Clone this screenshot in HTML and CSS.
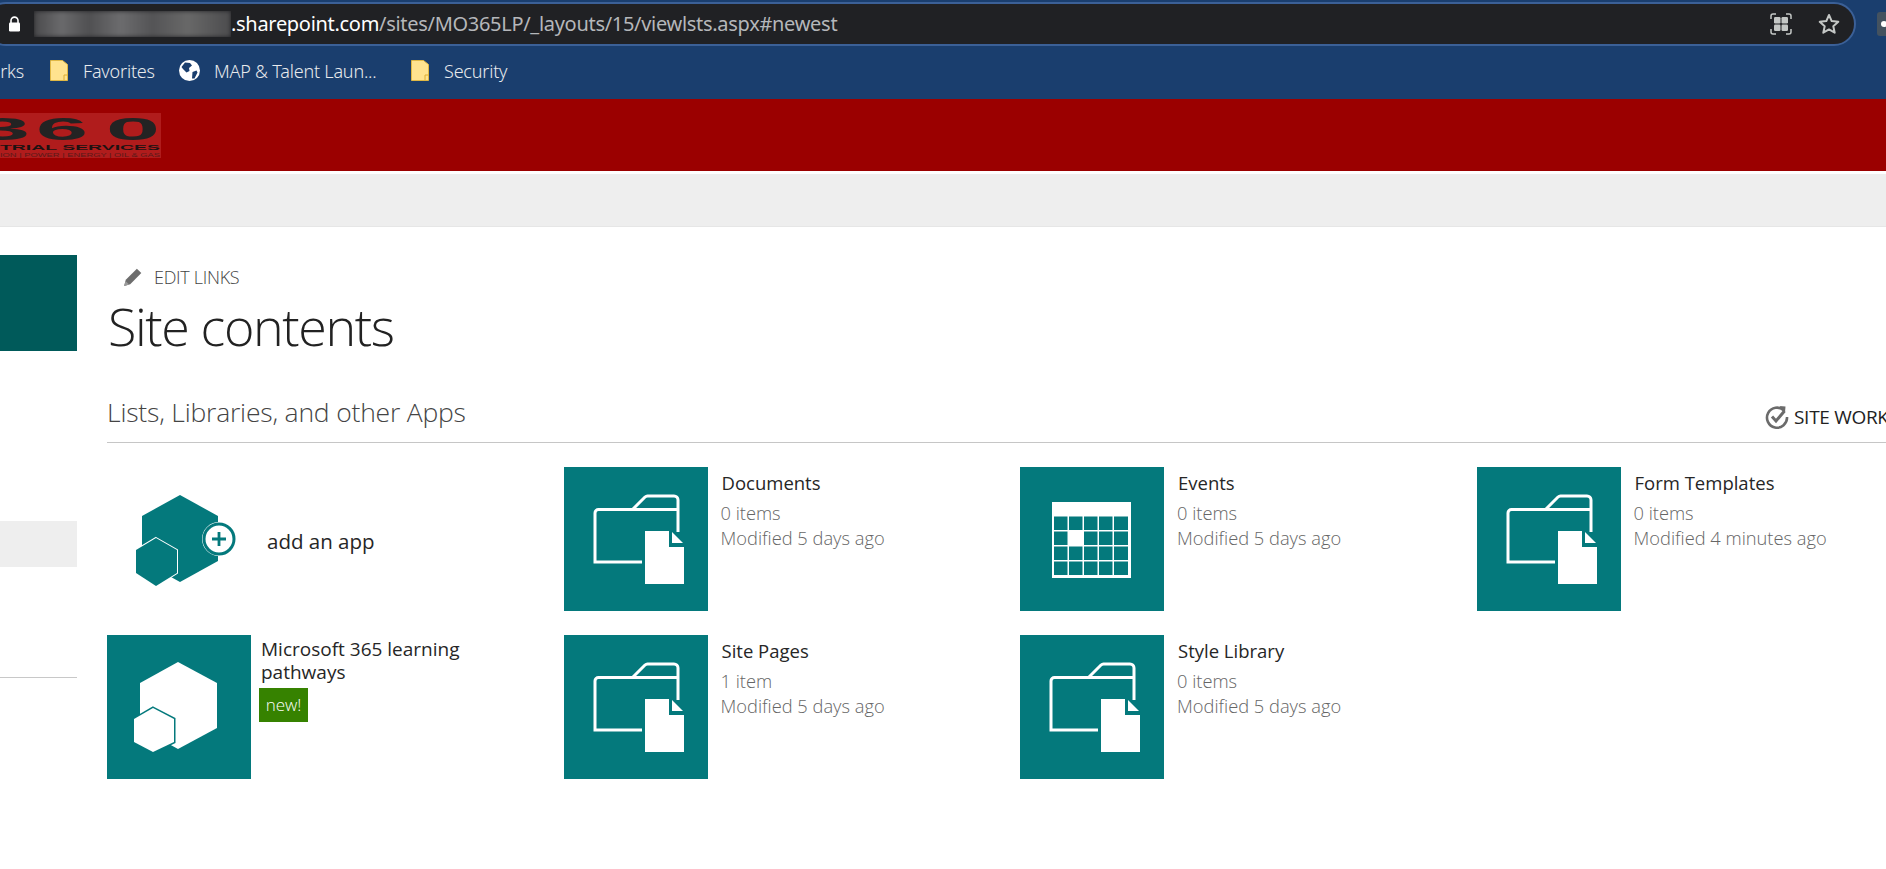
FILE: index.html
```html
<!DOCTYPE html>
<html lang="en">
<head>
<meta charset="utf-8">
<title>Site contents</title>
<link rel="stylesheet" href="styles.css">
</head>
<body>
<header class="browser">
  <div class="toolbar">
    <div class="omnibox">
      <svg class="lock" width="13" height="16" viewBox="0 0 13 16"><path d="M3 7V4.600a3.500 3.500 0 0 1 7 0V7" fill="none" stroke="#fff" stroke-width="1.600"/><rect x="1" y="6.500" width="11" height="9" rx="1.200" fill="#fff"/></svg>
      <div class="blur-box"><div class="blur-fill"></div></div>
      <div class="url"><span class="url-host">.sharepoint.com</span><span class="url-path">/sites/MO365LP/_layouts/15/viewlsts.aspx#newest</span></div>
      <svg class="omni-icon" width="22" height="22" viewBox="0 0 22 22"><path d="M1 6V3a2 2 0 0 1 2-2h3M16 1h3a2 2 0 0 1 2 2v3M21 16v3a2 2 0 0 1-2 2h-3M6 21H3a2 2 0 0 1-2-2v-3" fill="none" stroke="#c4c7c5" stroke-width="1.500"/><rect x="4" y="4" width="6.500" height="6.500" rx="1.200" fill="#c4c7c5"/><rect x="11.500" y="4" width="6.500" height="6.500" rx="1.200" fill="#c4c7c5"/><rect x="4" y="11.500" width="6.500" height="6.500" rx="1.200" fill="#c4c7c5"/><rect x="11.500" y="11.500" width="6.500" height="6.500" rx="1.200" fill="#c4c7c5"/></svg>
      <svg class="omni-icon star" width="22" height="22" viewBox="0 0 22 22"><path d="M11 2l2.700 6.100 6.600.7-5 4.400 1.400 6.500L11 16.400l-5.700 3.300 1.400-6.500-5-4.400 6.600-.7z" fill="none" stroke="#c4c7c5" stroke-width="2" stroke-linejoin="round"/></svg>
    </div>
    <div class="ext-button"><span class="ext-dot"></span></div>
  </div>
  <nav class="bookmarks">
    <span class="bm-cut">rks</span>
    <svg class="bm-folder" width="18" height="21" viewBox="0 0 18 21"><path d="M.5.5h12l5 4v16H.5z" fill="#ffe38f" stroke="#e0b845"/><path d="M14 20v-5h3.500" fill="none" stroke="#dcae32"/></svg>
    <span class="bm-label bm-fav">Favorites</span>
    <svg class="bm-globe" width="21" height="21" viewBox="0 0 21 21"><circle cx="10.500" cy="10.500" r="10.500" fill="#fff"/><path d="M6 2.500l5 .5 2 2.500-3 2.500.5 3-3 1.500L4 9 2.500 7zM13.500 12l4-1.500 1 2-3 6-2.500 0z" fill="#1a3e6e"/></svg>
    <span class="bm-label bm-map">MAP &amp; Talent Laun...</span>
    <svg class="bm-folder" width="18" height="21" viewBox="0 0 18 21"><path d="M.5.5h12l5 4v16H.5z" fill="#ffe38f" stroke="#e0b845"/><path d="M14 20v-5h3.500" fill="none" stroke="#dcae32"/></svg>
    <span class="bm-label">Security</span>
  </nav>
</header>

<div class="brand-bar">
  <svg class="logo" width="161" height="45" viewBox="0 0 161 45">
    <rect width="161" height="45" fill="#b01c1c"/>
    <text class="logo-num" x="-24" y="27" textLength="54" lengthAdjust="spacingAndGlyphs">3</text>
    <text class="logo-num" x="36" y="27" textLength="52" lengthAdjust="spacingAndGlyphs">6</text>
    <text class="logo-num" x="106" y="27" textLength="54" lengthAdjust="spacingAndGlyphs">0</text>
    <text class="logo-sub" x="0" y="37" textLength="160" lengthAdjust="spacingAndGlyphs">TRIAL SERVICES</text>
    <text class="logo-tiny" x="0" y="44" textLength="160" lengthAdjust="spacingAndGlyphs">ION | POWER | ENERGY | OIL &amp; GAS</text>
  </svg>
</div>

<div class="ribbon"></div>

<main class="page">
  <aside class="sidenav">
    <div class="nav-block"></div>
    <div class="nav-selected"></div>
    <div class="nav-line"></div>
  </aside>

  <section class="content">
    <div class="edit-links">
      <svg width="20" height="20" viewBox="0 0 18 18"><path d="M1 17l1.500-5.500L12.500 1.500l4 4L6.500 15.500z" fill="#6d6d6d"/><path d="M1 17l1.300-4.500 3.200 3.200z" fill="#9a9a9a"/></svg>
      <span>EDIT LINKS</span>
    </div>
    <h1 class="page-title">Site contents</h1>
    <div class="section-head">
      <h2 class="section-title">Lists, Libraries, and other Apps</h2>
      <div class="workflows">
        <svg width="24" height="24" viewBox="0 0 24 24"><path d="M19 5.500A10 10 0 1 0 22 12" fill="none" stroke="#6b6b6b" stroke-width="2.600"/><path d="M14.500 1l6 .5-.5 6z" fill="#6b6b6b"/><path d="M7 11.500l4 4.500 8.500-10" fill="none" stroke="#6b6b6b" stroke-width="3"/></svg>
        <span>SITE WORKFLOWS</span>
      </div>
    </div>

    <div class="tiles">
      <a class="tile tile-add">
        <svg class="add-icon" width="100" height="92" viewBox="0 0 100 92">
          <path class="hex-teal" d="M44 0l38 21v45L44 87 6 66V21z"/>
          <circle cx="83" cy="44" r="17" fill="#fff"/>
          <circle cx="83" cy="44" r="15" fill="#fff" stroke="#04797c" stroke-width="3"/>
          <path d="M83 37v14M76 44h14" stroke="#04797c" stroke-width="2.800"/>
          <path class="hex-teal hex-cut" d="M20 43l21 12v23L20 91 0 78V55z"/>
        </svg>
        <span class="add-label">add an app</span>
      </a>

      <a class="tile">
        <span class="thumb"><svg class="folder-icon" width="144" height="144" viewBox="0 0 144 144"><use href="#i-folder"/></svg></span>
        <span class="meta">
          <span class="name">Documents</span>
          <span class="sub">0 items</span>
          <span class="sub">Modified 5 days ago</span>
        </span>
      </a>

      <a class="tile">
        <span class="thumb">
          <svg width="144" height="144" viewBox="0 0 144 144">
            <rect x="32" y="35" width="79" height="76" fill="#fff"/>
            <path fill="#04797c" d="M34 49.500h13.500V63H34zM49 49.500h13.500V63H49zM64 49.500h13.500V63H64zM79 49.500h13.500V63H79zM94 49.500h14V63H94zM34 64.500h13.500V78H34zM64 64.500h13.500V78H64zM79 64.500h13.500V78H79zM94 64.500h14V78H94zM34 79.500h13.500V93H34zM49 79.500h13.500V93H49zM64 79.500h13.500V93H64zM79 79.500h13.500V93H79zM94 79.500h14V93H94zM34 94.500h13.500V108H34zM49 94.500h13.500V108H49zM64 94.500h13.500V108H64zM79 94.500h13.500V108H79zM94 94.500h14V108H94z"/>
          </svg>
        </span>
        <span class="meta">
          <span class="name">Events</span>
          <span class="sub">0 items</span>
          <span class="sub">Modified 5 days ago</span>
        </span>
      </a>

      <a class="tile">
        <span class="thumb"><svg width="144" height="144" viewBox="0 0 144 144"><use href="#i-folder"/></svg></span>
        <span class="meta">
          <span class="name">Form Templates</span>
          <span class="sub">0 items</span>
          <span class="sub">Modified 4 minutes ago</span>
        </span>
      </a>

      <a class="tile">
        <span class="thumb">
          <svg width="144" height="144" viewBox="0 0 144 144">
            <path fill="#fff" d="M71 27l39 21v45l-39 21-38-21V48z"/>
            <path fill="#fff" stroke="#04797c" stroke-width="3" paint-order="stroke" d="M46 73l21 11v23l-21 10-19-10V84z"/>
          </svg>
        </span>
        <span class="meta meta-app">
          <span class="name name-wrap">Microsoft 365 learning pathways</span>
          <span class="badge">new!</span>
        </span>
      </a>

      <a class="tile">
        <span class="thumb"><svg width="144" height="144" viewBox="0 0 144 144"><use href="#i-folder"/></svg></span>
        <span class="meta">
          <span class="name">Site Pages</span>
          <span class="sub">1 item</span>
          <span class="sub">Modified 5 days ago</span>
        </span>
      </a>

      <a class="tile">
        <span class="thumb"><svg width="144" height="144" viewBox="0 0 144 144"><use href="#i-folder"/></svg></span>
        <span class="meta">
          <span class="name">Style Library</span>
          <span class="sub">0 items</span>
          <span class="sub">Modified 5 days ago</span>
        </span>
      </a>
    </div>
  </section>
</main>

<svg class="defs" width="0" height="0">
  <symbol id="i-folder" viewBox="0 0 144 144">
    <path d="M78 95H31V46a3.500 3.500 0 0 1 3.500-3.500H114M69 42l12-12a4 4 0 0 1 2.500-1H110a4 4 0 0 1 4 4v32" fill="none" stroke="#fff" stroke-width="3"/>
    <path fill="#fff" d="M81 64h24v16h15v37H81z"/>
    <path fill="#fff" d="M108 65v11h11z"/>
  </symbol>
</svg>
</body>
</html>
```
FILE: styles.css
```css
* { box-sizing: border-box; }
html, body { margin: 0; height: 100%; overflow: hidden; background: #fff; }
body { width: 1886px; height: 869px; font-family: "Open Sans", "Noto Sans", sans-serif; color: #262626; }
a { display: block; }

/* browser chrome */
.browser { height: 99px; background: #1a3e6e; overflow: hidden; font-family: "Noto Sans", sans-serif; }
.toolbar { display: flex; align-items: center; width: 1920px; margin-left: -16px; padding-top: 1px; height: 46px; }
.omnibox { flex: none; display: flex; align-items: center; width: 1872px; height: 44px; background: #202124; border: 2.500px solid #3b6097; border-radius: 22px; padding-left: 22px; padding-right: 12px; }
.lock { flex: none; margin-right: 13px; }
.blur-box { flex: none; width: 197px; height: 26px; overflow: hidden; }
.blur-fill { width: 100%; height: 100%; filter: blur(2px); background: linear-gradient(90deg, #4a4a4c, #6a6a6c 14%, #505052 28%, #6c6c6e 44%, #545456 60%, #686868 78%, #4c4c4e); }
.url { flex: 1; font-size: 20px; letter-spacing: -.3px; white-space: nowrap; }
.url-host { color: #fff; }
.url-path { color: #b5b7ba; }
.omni-icon { flex: none; margin-left: 26px; }
.star { margin-right: 2px; }
.ext-button { flex: none; position: relative; width: 30px; height: 24px; margin-left: 21px; background: #44525f; border-radius: 3px; }
.ext-dot { position: absolute; left: 4px; top: 9px; width: 6px; height: 6px; border-radius: 50%; background: #fff; }
.bookmarks { display: flex; align-items: center; height: 49px; margin-left: -13px; font-size: 18px; color: #e8eaed; white-space: nowrap; font-weight: 300; }
.bm-cut { width: 37px; text-align: right; letter-spacing: -.2px; }
.bm-folder { flex: none; margin: 0 15px 0 26px; }
.bm-globe { flex: none; margin: 0 14px 0 25px; }
.bm-label { letter-spacing: -.2px; }
.bm-fav { width: 71px; }
.bm-map { width: 171px; }

/* site bars */
.brand-bar { height: 72px; padding-top: 14px; background: #9b0000; }
.logo { display: block; overflow: visible; }
.logo-num { font-family: "Liberation Sans", sans-serif; font-weight: 700; font-size: 32px; fill: #232323; }
.logo-sub { font-family: "Liberation Sans", sans-serif; font-weight: 700; font-size: 7px; fill: #1e1212; }
.logo-tiny { font-family: "Liberation Sans", sans-serif; font-size: 5px; fill: #5a1a1a; }
.ribbon { height: 53px; margin-top: 3px; background: #eee; border-bottom: 1px solid #e6e6e6; }

/* page */
.page { display: flex; }
.sidenav { flex: none; width: 77px; padding-top: 28px; }
.nav-block { height: 96px; background: #005a5a; }
.nav-selected { height: 46px; margin-top: 170px; background: #eee; }
.nav-line { height: 1px; margin-top: 110px; background: #c8c8c8; }
.content { flex: 1; min-width: 0; margin-left: 30px; }

.edit-links { display: flex; align-items: center; height: 18px; margin-top: 41px; padding-left: 16px; font-size: 18px; font-weight: 300; color: #444; }
.edit-links span { margin-left: 11px; letter-spacing: -.3px; }
.page-title { margin: 9px 0 0 1px; font-size: 52px; line-height: 62px; font-weight: 300; color: #222; letter-spacing: -1.400px; }
.section-head { display: flex; justify-content: space-between; align-items: flex-end; height: 86px; padding: 0 0 12px 0; border-bottom: 1px solid #c6c6c6; }
.section-title { margin: 0; font-size: 26.500px; line-height: 36px; font-weight: 300; color: #444; letter-spacing: -.2px; }
.workflows { display: flex; align-items: center; gap: 5px; width: 121px; flex: none; white-space: nowrap; overflow: hidden; font-size: 19px; color: #222; margin-bottom: 0; letter-spacing: -.3px; }
.workflows svg { flex: none; }
.tiles { display: grid; grid-template-columns: repeat(4, 456.500px); grid-auto-rows: 168px; margin-top: 24px; }
.tile { display: flex; }
.thumb { flex: none; width: 144px; height: 144px; background: #04797c; }
.thumb svg { display: block; }
.meta { display: flex; flex-direction: column; padding: 0 0 0 13px; }
.name { font-size: 18.500px; line-height: 24px; margin: 4px 0 5px 1px; color: #262626; }
.sub { font-size: 18.300px; line-height: 25px; font-weight: 300; color: #666; letter-spacing: 0; }
.tile-add { align-items: flex-start; padding: 28px 0 0 29px; }
.add-icon { flex: none; }
.hex-teal { fill: #04797c; }
.hex-cut { stroke: #fff; stroke-width: 2; paint-order: stroke; }
.add-label { margin: 31px 0 0 31px; font-size: 20.500px; line-height: 30px; color: #262626; }
.meta-app { padding-left: 8px; width: 215px; }
.name-wrap { margin: 3px 0 4px 2px; line-height: 23px; font-size: 19px; }
.badge { align-self: flex-start; height: 34px; width: 49px; background: #368200; color: #fff; font-size: 17px; font-weight: 300; line-height: 34px; text-align: center; }
.defs { position: absolute; }
```
